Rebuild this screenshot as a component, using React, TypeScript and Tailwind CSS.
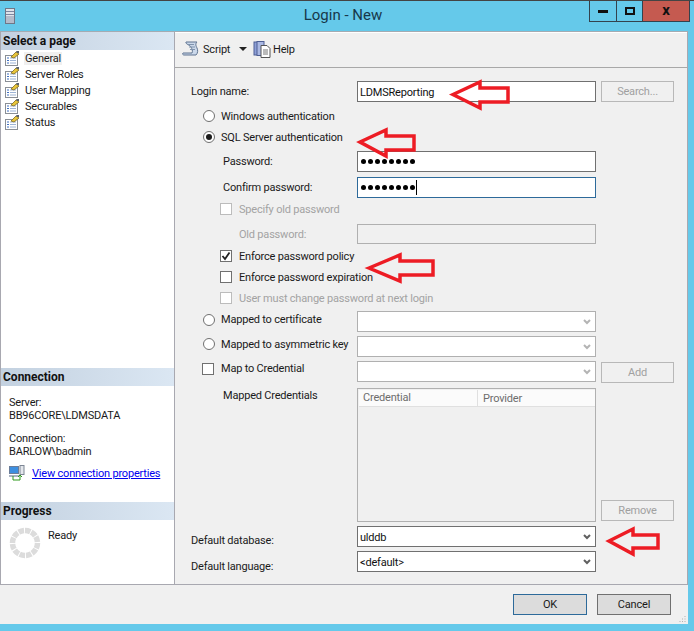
import type { ReactNode } from 'react';

const PageIcon = () => (
  <svg width="17" height="16" viewBox="0 0 17 16" className="shrink-0">
    <rect x="1.500" y="5.500" width="12" height="10" fill="#fff" stroke="#8a8f96" />
    <path d="M3 8h2M3 10.500h2M3 13h2" stroke="#3f6fc0" />
    <path d="M6 8h6M6 10.500h6M6 13h6" stroke="#9db4d6" />
    <path d="M7 7 12 2l3 2-5 4z" fill="#e8c53a" stroke="#7d6a20" strokeWidth="0.8" />
    <path d="M12 1h3v2h-2z" fill="#59616b" />
  </svg>
);

const Chevron = ({ off }: { off?: boolean }) => (
  <svg width="8" height="6" viewBox="0 0 8 6" className="absolute right-[4px] top-[7px]">
    <path d="M1 1l3 3 3-3" fill="none" stroke={off ? '#b4b4b4' : '#606060'} strokeWidth="2" />
  </svg>
);

const Radio = ({ on }: { on?: boolean }) => (
  <span className="flex h-[12px] w-[12px] shrink-0 items-center justify-center rounded-full border border-[#707070] bg-white">
    {on && <span className="h-[6px] w-[6px] rounded-full bg-[#1c1c1c]" />}
  </span>
);

const Check = ({ on, off }: { on?: boolean; off?: boolean }) => (
  <span
    className={`flex h-[12px] w-[12px] shrink-0 items-center justify-center border bg-white ${
      off ? 'border-[#bcbcbc]' : 'border-[#707070]'
    }`}
  >
    {on && (
      <svg width="10" height="10" viewBox="0 0 10 10">
        <path d="M1.500 5l2.500 3 4.500-6.500" fill="none" stroke="#222" strokeWidth="1.800" />
      </svg>
    )}
  </span>
);

const Field = ({ children, border = 'border-[#707070]' }: { children?: ReactNode; border?: string }) => (
  <div className={`relative flex h-[21px] w-[239px] items-center border bg-white px-[2px] text-[#111] ${border}`}>
    {children}
  </div>
);

const SideButton = ({ label }: { label: string }) => (
  <div className="ml-[5px] flex h-[21px] w-[73px] items-center justify-center border border-[#b8b8b8] text-[#a0a0a0]">
    {label}
  </div>
);

const SectionHead = ({ title }: { title: string }) => (
  <div className="flex h-[18px] items-center bg-gradient-to-r from-[#c3d1e0] to-[#dbe7f3] pl-[2px] text-[12px] font-bold tracking-normal text-[#111]">
    {title}
  </div>
);

const Dots = () => (
  <span className="flex gap-[2px] pl-[1px]">
    {[1, 2, 3, 4, 5, 6, 7, 8].map((i) => (
      <span key={i} className="h-[5px] w-[5px] rounded-full bg-black" />
    ))}
  </span>
);

const pages = ['General', 'Server Roles', 'User Mapping', 'Securables', 'Status'];

export default function App() {
  return (
    <div className="relative flex h-[631px] w-[694px] flex-col overflow-hidden bg-[#65c9ea] font-['Roboto',sans-serif] text-[11px] leading-none tracking-[-0.2px] text-[#1a1a1a]">
      {/* title bar */}
      <div className="relative flex h-[31px] shrink-0 items-center justify-center border-t border-[#444] text-[15px] tracking-normal text-[#17384a]">
        <svg width="10" height="16" viewBox="0 0 10 16" className="absolute left-[5px] top-[7px]">
          <rect x="0.500" y="0.500" width="9" height="15" fill="#dfe3ea" stroke="#6f7787" />
          <path d="M1 3.500h8M1 6.500h8" stroke="#7c86a0" />
          <rect x="1" y="8" width="8" height="7" fill="#b4bccb" />
        </svg>
        <span className="pb-[1px] pr-[8px]">Login - New</span>
        <div className="absolute left-[589px] top-0 flex h-[21px] w-[101px] border border-t-0 border-[#33424d]">
          <div className="flex w-[27px] items-center justify-center border-r border-[#33424d]">
            <span className="h-[3px] w-[10px] bg-[#111]" />
          </div>
          <div className="flex w-[26px] items-center justify-center border-r border-[#33424d]">
            <span className="h-[8px] w-[10px] border-2 border-[#111]" />
          </div>
          <div className="flex flex-1 items-center justify-center bg-[#c55a50] pb-[2px] text-[15px] font-bold text-[#111]">x</div>
        </div>
      </div>

      {/* window body */}
      <div className="mr-[6px] flex h-[593px] flex-col border-t border-[#a4abb2] bg-[#f0f0f0]">
        <div className="flex h-[553px] border-b border-[#a8a8b0]">
          {/* left panel */}
          <div className="flex w-[175px] shrink-0 flex-col border-x border-[#a8a8b0] bg-white">
            <SectionHead title="Select a page" />
            <div className="flex flex-1 flex-col pl-[3px]">
              {pages.map((p, i) => (
                <div key={p} className="flex h-[16px] items-center gap-[3px]">
                  <PageIcon />
                  <span className={`px-[1px] py-[1px] ${i === 0 ? 'bg-[#f0f0f0]' : ''}`}>{p}</span>
                </div>
              ))}
            </div>
            <div className="flex h-[134px] flex-col">
              <SectionHead title="Connection" />
              <div className="pl-[8px] pt-[10px] leading-[13px]">
                <div>Server:</div>
                <div>BB96CORE\LDMSDATA</div>
                <div className="mt-[10px]">Connection:</div>
                <div>BARLOW\badmin</div>
              </div>
              <div className="mt-[7px] flex items-center gap-[7px] pl-[8px]">
                <svg width="16" height="16" viewBox="0 0 16 16" className="shrink-0">
                  <rect x="0.500" y="1.500" width="9" height="7" fill="#3d8fe0" stroke="#6b7d99" />
                  <rect x="0" y="10" width="10" height="2" fill="#aab3c2" />
                  <rect x="11" y="0.500" width="4" height="9" fill="#e4e7ec" stroke="#7d8694" />
                  <path d="M4 11v4h7v-4M9 12l2-2 2 2" fill="none" stroke="#2f9a1c" />
                </svg>
                <span className="whitespace-nowrap text-[#0000ee] underline">View connection properties</span>
              </div>
            </div>
            <div className="flex h-[82px] flex-col">
              <SectionHead title="Progress" />
              <div className="flex pl-[8px] pt-[7px]">
                <svg width="32" height="32" viewBox="0 0 32 32" className="shrink-0">
                  <circle cx="16" cy="16" r="12.500" fill="none" stroke="#dcdcdc" strokeWidth="5.500" strokeDasharray="5.500 1" />
                </svg>
                <span className="ml-[7px] mt-[3px]">Ready</span>
              </div>
            </div>
          </div>

          {/* right panel */}
          <div className="flex flex-1 flex-col border-r border-[#a8a8b0]">
            <div className="flex h-[36px] shrink-0 items-center border-b border-t border-[#a8a8a8] border-t-white pb-[2px] pl-[7px]">
              <svg width="17" height="16" viewBox="0 0 17 16" className="shrink-0">
                <path d="M4 1h11c-2 2-1 4 0 6s1 5-1 7H2c-1 0-2-1-1-2h9c1-2 0-4-1-6S3 3 4 1z" fill="#cbd8ea" stroke="#5f7390" />
                <path d="M6 3.500h6M7 6h6M8 8.500h5" stroke="#7f93ad" />
              </svg>
              <span className="ml-[4px] w-[26px]">Script</span>
              <span className="ml-[10px] h-0 w-0 border-x-[4px] border-t-[4px] border-x-transparent border-t-[#222]" />
              <svg width="18" height="17" viewBox="0 0 18 17" className="ml-[6px] shrink-0">
                <rect x="1" y="1" width="9" height="13" fill="#8d9fd6" stroke="#4e5f94" />
                <rect x="4" y="0.500" width="7" height="14" fill="#aab8e3" stroke="#4e5f94" />
                <path d="M8 4.500h6l3 3v9H8z" fill="#fff" stroke="#555" />
                <path d="M10 9h5M10 11h5M10 13h5" stroke="#777" />
              </svg>
              <span className="ml-[2px]">Help</span>
            </div>

            <div className="flex flex-col pl-[16px] pt-[13px]">
              <div className="flex h-[21px] items-center">
                <span className="w-[166px]">Login name:</span>
                <Field>
                  <span className="pt-[1px]">LDMSReporting</span>
                </Field>
                <SideButton label="Search..." />
              </div>
              <div className="mt-[3px] flex h-[21px] items-center gap-[6px] pl-[12px]">
                <Radio />
                <span className="pt-[1px]">Windows authentication</span>
              </div>
              <div className="flex h-[21px] items-center gap-[6px] pl-[12px]">
                <Radio on />
                <span className="pt-[1px]">SQL Server authentication</span>
              </div>
              <div className="mt-[4px] flex h-[20px] items-center">
                <span className="w-[166px] pl-[32px]">Password:</span>
                <Field>
                  <Dots />
                </Field>
              </div>
              <div className="mt-[6px] flex h-[20px] items-center">
                <span className="w-[166px] pl-[32px]">Confirm password:</span>
                <Field border="border-[#2d6a9a]">
                  <Dots />
                  <span className="ml-[1px] h-[15px] w-[1px] bg-black" />
                </Field>
              </div>
              <div className="mt-[2px] flex h-[20px] items-center gap-[7px] pl-[29px] text-[#a3a3a3]">
                <Check off />
                <span>Specify old password</span>
              </div>
              <div className="mt-[5px] flex h-[20px] items-center text-[#a3a3a3]">
                <span className="w-[166px] pl-[48px]">Old password:</span>
                <div className="h-[20px] w-[239px] border border-[#b0b0b0]" />
              </div>
              <div className="mt-[2px] flex h-[20px] items-center gap-[7px] pl-[29px]">
                <Check on />
                <span>Enforce password policy</span>
              </div>
              <div className="mt-[1px] flex h-[20px] items-center gap-[7px] pl-[29px]">
                <Check />
                <span>Enforce password expiration</span>
              </div>
              <div className="mt-[1px] flex h-[20px] items-center gap-[7px] pl-[29px] text-[#a3a3a3]">
                <Check off />
                <span>User must change password at next login</span>
              </div>
              <div className="mt-[3px] flex h-[21px] items-center">
                <span className="flex w-[166px] items-center gap-[6px] pb-[4px] pl-[12px]">
                  <Radio />
                  Mapped to certificate
                </span>
                <Field border="border-[#b0b0b0]">
                  <Chevron off />
                </Field>
              </div>
              <div className="mt-[4px] flex h-[21px] items-center">
                <span className="flex w-[166px] items-center gap-[6px] pb-[5px] pl-[12px]">
                  <Radio />
                  Mapped to asymmetric key
                </span>
                <Field border="border-[#b0b0b0]">
                  <Chevron off />
                </Field>
              </div>
              <div className="mt-[4px] flex h-[21px] items-center">
                <span className="flex w-[166px] items-center gap-[7px] pb-[6px] pl-[11px]">
                  <Check />
                  Map to Credential
                </span>
                <Field border="border-[#b0b0b0]">
                  <Chevron off />
                </Field>
                <div className="mt-[2px]">
                  <SideButton label="Add" />
                </div>
              </div>
              <div className="mt-[6px] flex h-[134px]">
                <span className="w-[166px] pl-[32px] pt-[2px]">Mapped Credentials</span>
                <div className="w-[239px] border border-[#b0b0b0] pl-[1px] pt-[1px]">
                  <div className="flex h-[17px] items-center border-b border-[#e0e0e0] bg-[#fbfbfb] text-[#6d6d6d]">
                    <span className="w-[119px] border-r border-[#e0e0e0] pl-[4px] leading-[16px]">Credential</span>
                    <span className="pl-[5px]">Provider</span>
                  </div>
                </div>
                <div className="mt-[112px]">
                  <SideButton label="Remove" />
                </div>
              </div>
              <div className="mt-[4px] flex h-[21px] items-center">
                <span className="w-[166px] pt-[7px]">Default database:</span>
                <Field>
                  <span className="pt-[1px]">ulddb</span>
                  <Chevron />
                </Field>
              </div>
              <div className="mt-[4px] flex h-[21px] items-center">
                <span className="w-[166px] pt-[9px]">Default language:</span>
                <Field>
                  <span className="pt-[1px]">{'<default>'}</span>
                  <Chevron />
                </Field>
              </div>
            </div>
          </div>
        </div>

        {/* footer */}
        <div className="relative flex flex-1 justify-end gap-[10px] pr-[17px] pt-[9px]">
          <div className="flex h-[21px] w-[74px] items-center justify-center border border-[#2d6a9a] bg-[#dcdcdc]">OK</div>
          <div className="flex h-[21px] w-[74px] items-center justify-center border border-[#707070] bg-[#dcdcdc]">Cancel</div>
          <svg width="8" height="8" viewBox="0 0 8 8" className="absolute bottom-[1px] right-[1px]">
            <path d="M6 1v1M6 3.500v1M3.500 3.500v1M6 6v1M3.500 6v1M1 6v1" stroke="#b0b0b0" />
          </svg>
        </div>
      </div>

      {/* annotation arrows drawn over the dialog */}
      <svg width="694" height="631" viewBox="0 0 694 631" className="pointer-events-none absolute inset-0">
        <g fill="none" stroke="#ed1c24" strokeWidth="3.500" strokeLinejoin="miter">
          <path d="M453 94.500 480 82v6h28v14h-28v6z" />
          <path d="M360 142 386 130v6h28v14h-28v6z" />
          <path d="M369 268 400 255v6h33v14h-33v6z" />
          <path d="M609 541 633 529v6h25v13h-25v6z" />
        </g>
      </svg>
    </div>
  );
}
